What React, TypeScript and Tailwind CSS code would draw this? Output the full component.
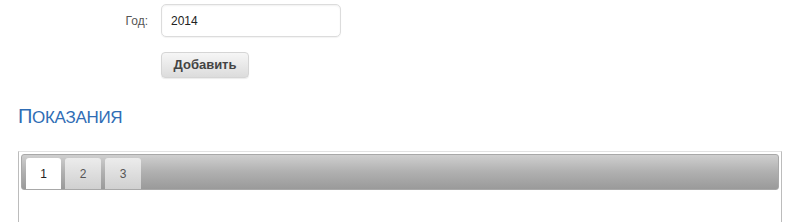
import React from 'react';

const tabs = ['1', '2', '3'];

export default function App() {
  return (
    <div className="w-[800px] h-[222px] bg-white overflow-hidden font-['Liberation_Sans',Arial,sans-serif]">
      {/* form */}
      <div className="flex items-center pt-[4px]">
        <label className="w-[149px] text-right pr-[1px] text-[12px] text-[#555]">Год:</label>
        <div className="ml-[12px] w-[180px] h-[33px] rounded-[5px] border border-[#dcdcdc] shadow-[inset_0_1px_2px_rgba(0,0,0,0.06),0_1px_1px_rgba(0,0,0,0.05)] flex items-center pl-[9px] text-[12px] text-[#222]">
          2014
        </div>
      </div>
      <div className="pl-[161px] pt-[15px]">
        <button className="w-[88px] h-[26px] rounded-[4px] border border-[#d5d5d5] bg-gradient-to-b from-[#f6f6f6] to-[#dcdcdc] text-[13px] font-bold text-[#444] shadow-[0_1px_1px_rgba(0,0,0,0.08)]">
          Добавить
        </button>
      </div>

      {/* heading */}
      <h2 className="pl-[18px] pt-[26px] leading-[24px] text-[#2f6db5] uppercase tracking-[-0.3px]">
        <span className="text-[20px]">П</span>
        <span className="text-[17px]">оказания</span>
      </h2>

      {/* tabs panel */}
      <div className="mx-[18px] mt-[21px] w-[764px] h-[80px] border-x border-t border-x-[#bcbcbc] border-t-[#e2e2e2] px-[2px] pt-[2px]">
        <div className="h-[36px] rounded-[3px] border border-[#a8a8a8] bg-gradient-to-b from-[#cfcfcf] via-[#b0b0b0] to-[#9a9a9a] flex items-end gap-[4px] pl-[4px]">
          {tabs.map((t, i) =>
            i === 0 ? (
              <div key={t} className="w-[35px] h-[31px] rounded-t-[3px] bg-white flex items-center justify-center text-[12px] text-[#222]">
                {t}
              </div>
            ) : (
              <div key={t} className="w-[36px] h-[31px] rounded-t-[3px] bg-gradient-to-b from-[#ececec] via-[#dedede] to-[#d0d0d0] flex items-center justify-center text-[12px] text-[#555]">
                {t}
              </div>
            )
          )}
        </div>
      </div>
    </div>
  );
}
